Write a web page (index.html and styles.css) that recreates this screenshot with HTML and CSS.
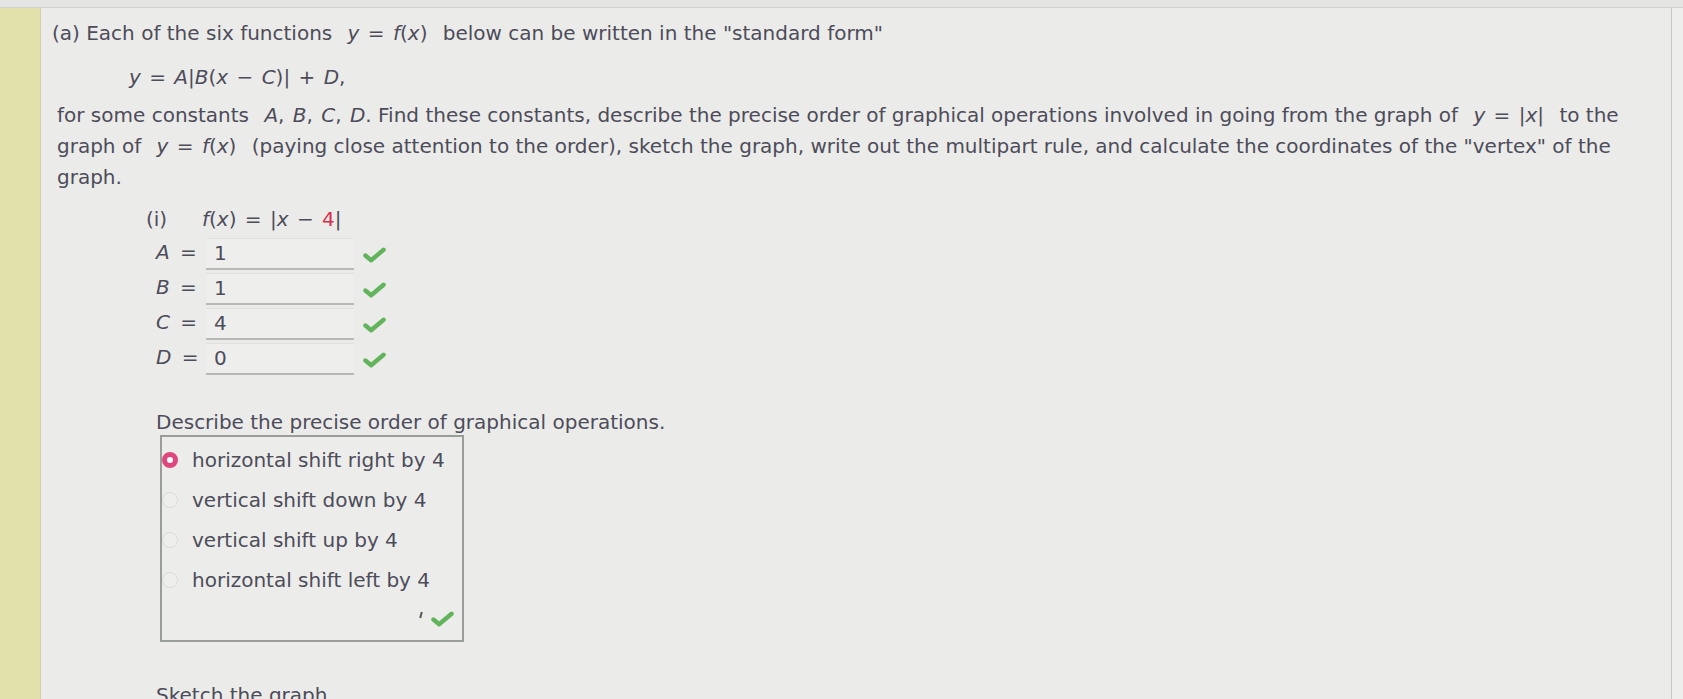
FILE: index.html
```html
<!DOCTYPE html>
<html lang="en">
  <head>
    <meta charset="UTF-8" />
    <meta name="viewport" content="width=device-width, initial-scale=1.0" />
    <title>Absolute Value Functions</title>
    <link rel="stylesheet" href="styles.css">
  </head>
  <body>
    <div class="topbar"></div>
    <div class="frame">
      <aside class="rail"></aside>
      <main class="page">
        <p class="lead">(a) Each of the six functions <span class="math"><i>y</i> = <i>f</i>(<i>x</i>)</span> below can be written in the "standard form"</p>
        <p class="formula"><i>y</i> = <i>A</i>|<i>B</i>(<i>x</i> − <i>C</i>)| + <i>D</i>,</p>
        <p class="para">for some constants <span class="math tight"><i>A</i>, <i>B</i>, <i>C</i>, <i>D</i></span>. Find these constants, describe the precise order of graphical operations involved in going from the graph of <span class="math"><i>y</i> = |<i>x</i>|</span> to the graph of <span class="math"><i>y</i> = <i>f</i>(<i>x</i>)</span> (paying close attention to the order), sketch the graph, write out the multipart rule, and calculate the coordinates of the "vertex" of the graph.</p>

        <div class="part">
          <div class="part-head">
            <span class="part-num">(i)</span>
            <span class="math"><i>f</i>(<i>x</i>) = |<i>x</i> − <span class="given">4</span>|</span>
          </div>

          <div class="answers">
            <div class="answer-row">
              <span class="var"><i>A</i> =</span>
              <span class="field">1</span>
              <svg class="check" viewBox="0 0 24 16"><path d="M2.5 8.5 L8.5 13.5 L21.5 2.5" /></svg>
            </div>
            <div class="answer-row">
              <span class="var"><i>B</i> =</span>
              <span class="field">1</span>
              <svg class="check" viewBox="0 0 24 16"><path d="M2.5 8.5 L8.5 13.5 L21.5 2.5" /></svg>
            </div>
            <div class="answer-row">
              <span class="var"><i>C</i> =</span>
              <span class="field">4</span>
              <svg class="check" viewBox="0 0 24 16"><path d="M2.5 8.5 L8.5 13.5 L21.5 2.5" /></svg>
            </div>
            <div class="answer-row">
              <span class="var"><i>D</i> =</span>
              <span class="field">0</span>
              <svg class="check" viewBox="0 0 24 16"><path d="M2.5 8.5 L8.5 13.5 L21.5 2.5" /></svg>
            </div>
          </div>

          <p class="prompt">Describe the precise order of graphical operations.</p>
          <div class="choices">
            <div class="choice selected"><span class="radio"></span>horizontal shift right by 4</div>
            <div class="choice"><span class="radio"></span>vertical shift down by 4</div>
            <div class="choice"><span class="radio"></span>vertical shift up by 4</div>
            <div class="choice"><span class="radio"></span>horizontal shift left by 4</div>
            <div class="choice-foot">
              <span class="tick-mark"></span>
              <svg class="check" viewBox="0 0 24 16"><path d="M2.5 8.5 L8.5 13.5 L21.5 2.5" /></svg>
            </div>
          </div>

          <p class="prompt sketch">Sketch the graph.</p>
        </div>
      </main>
      <div class="edge"></div>
    </div>
  </body>
</html>
```

FILE: styles.css
```css
html, body {
  margin: 0;
  padding: 0;
  height: 100%;
  overflow: hidden;
}
body {
  font-family: 'DejaVu Sans', Verdana, sans-serif;
  font-size: 20px;
  color: #4d4c5a;
  background-color: #e9e9e7;
}
.topbar {
  height: 7px;
  background-color: #e4e5e3;
  border-bottom: 1px solid #cfd0ce;
}
.frame {
  display: flex;
  height: calc(100% - 8px);
}
.rail {
  width: 40px;
  flex-shrink: 0;
  background-color: #e3e1ab;
  border-right: 1px solid #d2d1a8;
}
.page {
  flex-grow: 1;
  padding: 10px 0 0 11px;
  background-color: #ebebe9;
}
.edge {
  width: 11px;
  flex-shrink: 0;
  background-color: #eeeeec;
  border-left: 1px solid #c9c9c7;
}
p {
  margin: 0;
}
i {
  font-style: italic;
}
.math {
  margin: 0 9px;
  word-spacing: 2px;
}
.math.tight {
  margin-right: 0;
}
.lead {
  line-height: 31px;
}
.formula {
  line-height: 31px;
  margin-top: 13px;
  padding-left: 77px;
  word-spacing: 2px;
}
.para {
  line-height: 31px;
  margin-top: 7px;
  padding-left: 5px;
  padding-right: 30px;
}
.part {
  margin-top: 10px;
  padding-left: 94px;
}
.part-head {
  display: flex;
  align-items: center;
  height: 31px;
}
.part-num {
  width: 56px;
}
.part-head .math {
  margin: 0;
}
.given {
  color: #d8304f;
}
.answers {
  padding-left: 10px;
}
.answer-row {
  display: flex;
  align-items: center;
  height: 35px;
}
.var {
  width: 50px;
  word-spacing: 4px;
}
.field {
  width: 140px;
  height: 29px;
  line-height: 29px;
  padding-left: 8px;
  background-color: #eeeeed;
  border-top: 1px solid #e0e0df;
  border-bottom: 2px solid #b8b8b7;
  margin-top: 4px;
}
.check {
  width: 23px;
  height: 16px;
  margin-left: 9px;
  margin-top: 6px;
}
.check path {
  fill: none;
  stroke: #62b45c;
  stroke-width: 4.5;
  stroke-linecap: round;
  stroke-linejoin: round;
}
.prompt {
  line-height: 26px;
  margin-top: 35px;
  padding-left: 10px;
}
.choices {
  width: 300px;
  margin-left: 14px;
  padding-top: 3px;
  border: 2px solid #9a9e9a;
  background-color: #ececea;
}
.choice {
  display: flex;
  align-items: center;
  height: 40px;
}
.radio {
  width: 14px;
  height: 14px;
  margin: 0 14px 0 0;
  border: 1px solid #dcdcda;
  border-radius: 50%;
  background-color: #eeeeec;
  flex-shrink: 0;
}
.choice.selected .radio {
  width: 6px;
  height: 6px;
  border: 5px solid #e0457b;
  background-color: #fff;
}
.choice-foot {
  display: flex;
  justify-content: flex-end;
  align-items: center;
  height: 34px;
  padding: 0 8px 6px 0;
}
.tick-mark {
  width: 2px;
  height: 6px;
  background-color: #555;
  transform: rotate(15deg);
  margin-top: -4px;
}
.choice-foot .check {
  margin-top: 4px;
}
.sketch {
  margin-top: 40px;
}
```
